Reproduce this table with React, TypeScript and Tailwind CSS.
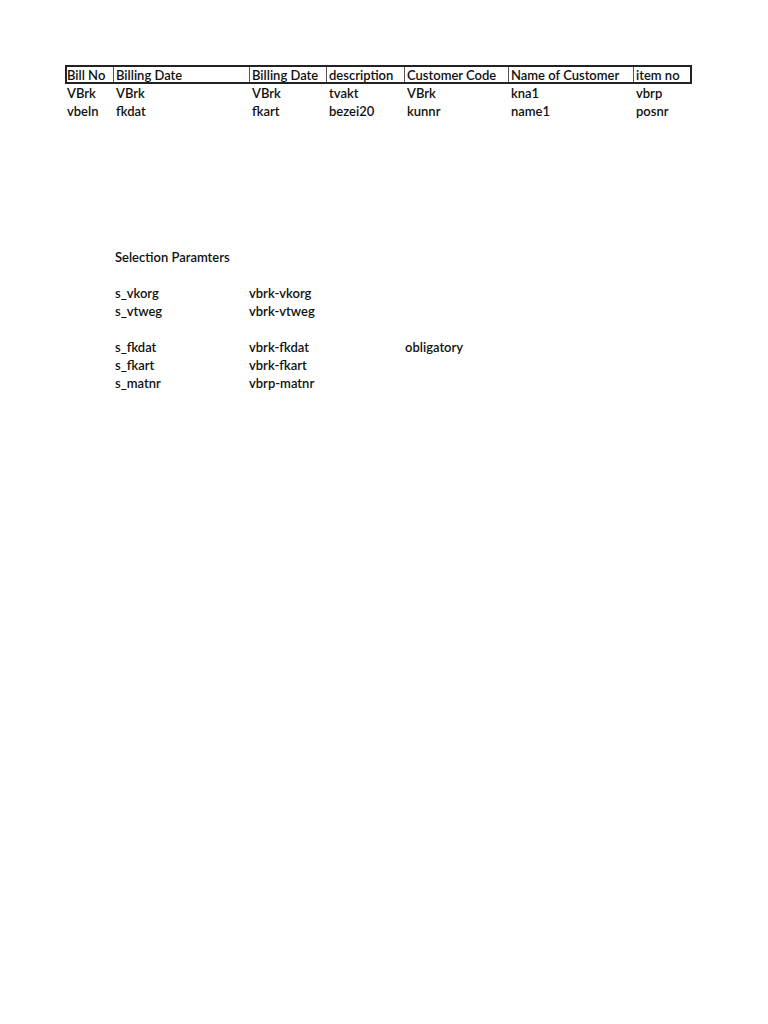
import React from "react";

const cols = "grid-cols-[46px_136px_77px_78px_104px_125px_57px]";

const header = ["Bill No", "Billing Date", "Billing Date", "description", "Customer Code", "Name of Customer", "item no"];
const rows = [
  ["VBrk", "VBrk", "VBrk", "tvakt", "VBrk", "kna1", "vbrp"],
  ["vbeln", "fkdat", "fkart", "bezei20", "kunnr", "name1", "posnr"],
];

const params: [string, string, string][] = [
  ["Selection Paramters", "", ""],
  ["", "", ""],
  ["s_vkorg", "vbrk-vkorg", ""],
  ["s_vtweg", "vbrk-vtweg", ""],
  ["", "", ""],
  ["s_fkdat", "vbrk-fkdat", "obligatory"],
  ["s_fkart", "vbrk-fkart", ""],
  ["s_matnr", "vbrp-matnr", ""],
];

export default function App() {
  return (
    <div
      className="w-[768px] h-[1024px] bg-white text-[#111] text-[13px] leading-[18px] font-semibold"
      style={{ fontFamily: "Lato, 'Open Sans', sans-serif" }}
    >
      <div className="pt-[65px] pl-[65px]">
        <div className={`grid ${cols} w-fit border-2 border-[#222]`}>
          {header.map((h, i) => (
            <div
              key={i}
              className={`h-[15px] leading-[16px] whitespace-nowrap ${i > 0 ? "border-l border-[#555] pl-[2px]" : ""}`}
            >
              {h}
            </div>
          ))}
        </div>
        {rows.map((r, ri) => (
          <div key={ri} className={`grid ${cols} w-fit border-x-2 border-transparent`}>
            {r.map((c, ci) => (
              <div
                key={ci}
                className={`h-[18px] whitespace-nowrap ${ci > 0 ? "border-l border-transparent pl-[2px]" : ""}`}
              >
                {c}
              </div>
            ))}
          </div>
        ))}
        <div className="mt-[128px] grid grid-cols-[48px_134px_156px_100px] w-fit">
          {params.map((p, pi) => (
            <React.Fragment key={pi}>
              <div className="h-[18px]" />
              <div className="h-[18px] pl-[2px] whitespace-nowrap">{p[0]}</div>
              <div className="h-[18px] pl-[2px] whitespace-nowrap">{p[1]}</div>
              <div className="h-[18px] pl-[2px] whitespace-nowrap">{p[2]}</div>
            </React.Fragment>
          ))}
        </div>
      </div>
    </div>
  );
}
